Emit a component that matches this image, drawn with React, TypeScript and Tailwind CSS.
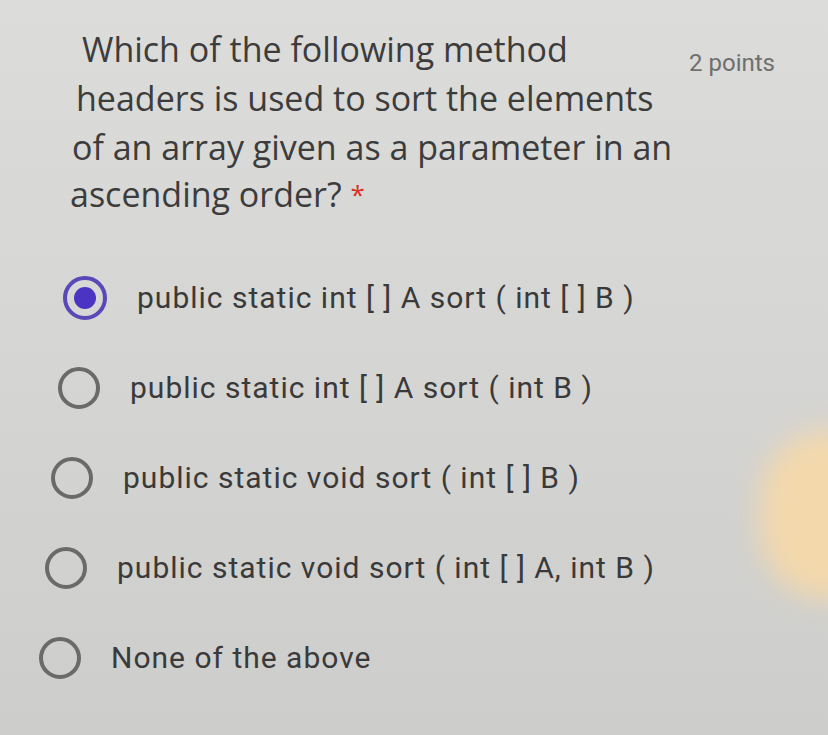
import React from "react";

const options = [
  { label: "public static int [ ] A sort ( int [ ] B )", indent: "ml-[63px]", checked: true },
  { label: "public static int [ ] A sort ( int B )", indent: "ml-[58px]", checked: false },
  { label: "public static void sort ( int [ ] B )", indent: "ml-[51px]", checked: false },
  { label: "public static void sort ( int [ ] A, int B )", indent: "ml-[45px]", checked: false },
  { label: "None of the above", indent: "ml-[39px]", checked: false },
];

function Radio({ checked }: { checked: boolean }) {
  if (checked) {
    return (
      <span className="h-[44px] w-[44px] shrink-0 rounded-full border-[4px] border-[#5a47b8] flex items-center justify-center">
        <span className="h-[22px] w-[22px] rounded-full bg-[#4b33c4]" />
      </span>
    );
  }
  return <span className="h-[42px] w-[42px] shrink-0 rounded-full border-[4px] border-[#6a6a6a]" />;
}

export default function App() {
  return (
    <div className="relative h-[735px] w-[828px] overflow-hidden bg-gradient-to-b from-[#dcdcda] via-[#d5d5d3] to-[#cdcdcb] font-['Open_Sans',sans-serif]">
      {/* warm glare on the right edge */}
      <div className="pointer-events-none absolute left-[760px] top-[430px] h-[170px] w-[140px] rounded-full bg-[#f7d9a8] opacity-90 blur-[14px]" />

      <div className="flex items-start justify-between pt-[25px]">
        <div className="flex flex-col text-[34px] leading-[49px] text-[#3c3c3c]">
          <span className="ml-[82px]">Which of the following method</span>
          <span className="ml-[76px]">headers is used to sort the elements</span>
          <span className="ml-[72px]">of an array given as a parameter in an</span>
          <span className="ml-[70px] -mt-[2px]">
            ascending order? <span className="align-top text-[26px] text-[#d93025]">*</span>
          </span>
        </div>
        <span className="mr-[53px] mt-[20px] text-[24px] text-[#6f6f6f] font-['Roboto',sans-serif]">2 points</span>
      </div>

      <div className="mt-[56px] flex flex-col gap-[45px] font-['Roboto',sans-serif] text-[30px] tracking-[1px] text-[#3a3a3a]">
        {options.map((o) => (
          <label key={o.label} className={`flex items-center gap-[30px] ${o.indent}`}>
            <Radio checked={o.checked} />
            <span>{o.label}</span>
          </label>
        ))}
      </div>
    </div>
  );
}
